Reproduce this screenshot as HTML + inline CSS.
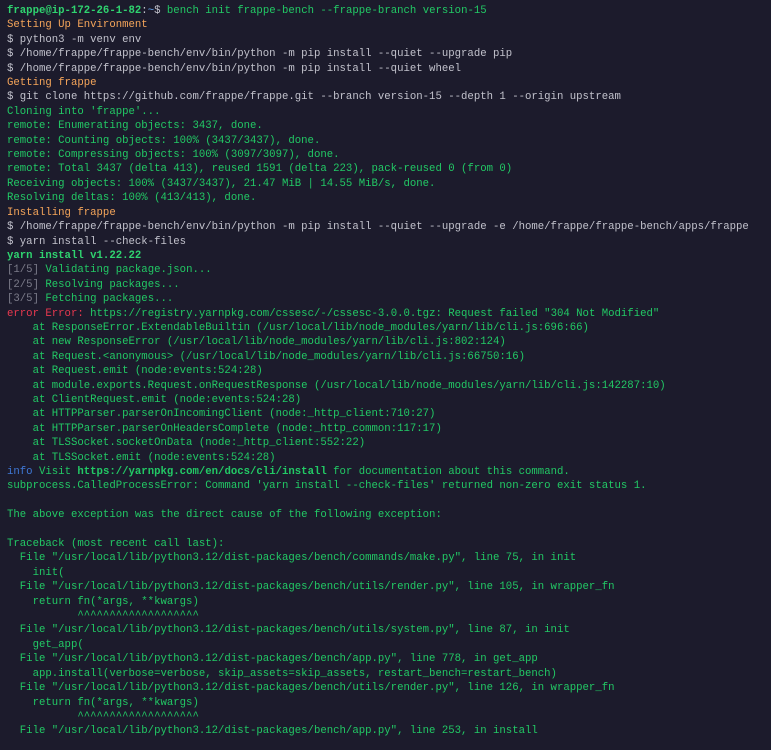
<!DOCTYPE html>
<html><head><meta charset="utf-8"><style>
html,body{margin:0;padding:0;background:#1c1b2c;width:771px;height:750px;overflow:hidden}
pre{margin:0;padding:4px 0 0 7px;font-family:"Liberation Mono","DejaVu Sans Mono",monospace;font-size:10.66px;line-height:14.4px;color:#22c965;white-space:pre}
.g{color:#22c965}.gb{color:#2fd36f;font-weight:bold}.o{color:#f5a55a}.w{color:#c2c2cc}.b{color:#6aa8f0}.r{color:#e8384f}.d{color:#7c7c8a}.i{color:#3f78d6}
</style></head><body><pre><span class="gb">frappe@ip-172-26-1-82</span><span class="w">:</span><span class="b">~</span><span class="w">$ </span><span class="g">bench init frappe-bench --frappe-branch version-15</span>
<span class="o">Setting Up Environment</span>
<span class="w">$ python3 -m venv env</span>
<span class="w">$ /home/frappe/frappe-bench/env/bin/python -m pip install --quiet --upgrade pip</span>
<span class="w">$ /home/frappe/frappe-bench/env/bin/python -m pip install --quiet wheel</span>
<span class="o">Getting frappe</span>
<span class="w">$ git clone https://github.com/frappe/frappe.git --branch version-15 --depth 1 --origin upstream</span>
Cloning into 'frappe'...
remote: Enumerating objects: 3437, done.
remote: Counting objects: 100% (3437/3437), done.
remote: Compressing objects: 100% (3097/3097), done.
remote: Total 3437 (delta 413), reused 1591 (delta 223), pack-reused 0 (from 0)
Receiving objects: 100% (3437/3437), 21.47 MiB | 14.55 MiB/s, done.
Resolving deltas: 100% (413/413), done.
<span class="o">Installing frappe</span>
<span class="w">$ /home/frappe/frappe-bench/env/bin/python -m pip install --quiet --upgrade -e /home/frappe/frappe-bench/apps/frappe</span>
<span class="w">$ yarn install --check-files</span>
<span class="gb">yarn install v1.22.22</span>
<span class="d">[1/5]</span> Validating package.json...
<span class="d">[2/5]</span> Resolving packages...
<span class="d">[3/5]</span> Fetching packages...
<span class="r">error Error:</span> https://registry.yarnpkg.com/cssesc/-/cssesc-3.0.0.tgz: Request failed "304 Not Modified"
    at ResponseError.ExtendableBuiltin (/usr/local/lib/node_modules/yarn/lib/cli.js:696:66)
    at new ResponseError (/usr/local/lib/node_modules/yarn/lib/cli.js:802:124)
    at Request.&lt;anonymous&gt; (/usr/local/lib/node_modules/yarn/lib/cli.js:66750:16)
    at Request.emit (node:events:524:28)
    at module.exports.Request.onRequestResponse (/usr/local/lib/node_modules/yarn/lib/cli.js:142287:10)
    at ClientRequest.emit (node:events:524:28)
    at HTTPParser.parserOnIncomingClient (node:_http_client:710:27)
    at HTTPParser.parserOnHeadersComplete (node:_http_common:117:17)
    at TLSSocket.socketOnData (node:_http_client:552:22)
    at TLSSocket.emit (node:events:524:28)
<span class="i">info</span> Visit <b>https://yarnpkg.com/en/docs/cli/install</b> for documentation about this command.
subprocess.CalledProcessError: Command 'yarn install --check-files' returned non-zero exit status 1.

The above exception was the direct cause of the following exception:

Traceback (most recent call last):
  File "/usr/local/lib/python3.12/dist-packages/bench/commands/make.py", line 75, in init
    init(
  File "/usr/local/lib/python3.12/dist-packages/bench/utils/render.py", line 105, in wrapper_fn
    return fn(*args, **kwargs)
           ^^^^^^^^^^^^^^^^^^^
  File "/usr/local/lib/python3.12/dist-packages/bench/utils/system.py", line 87, in init
    get_app(
  File "/usr/local/lib/python3.12/dist-packages/bench/app.py", line 778, in get_app
    app.install(verbose=verbose, skip_assets=skip_assets, restart_bench=restart_bench)
  File "/usr/local/lib/python3.12/dist-packages/bench/utils/render.py", line 126, in wrapper_fn
    return fn(*args, **kwargs)
           ^^^^^^^^^^^^^^^^^^^
  File "/usr/local/lib/python3.12/dist-packages/bench/app.py", line 253, in install</pre></body></html>
